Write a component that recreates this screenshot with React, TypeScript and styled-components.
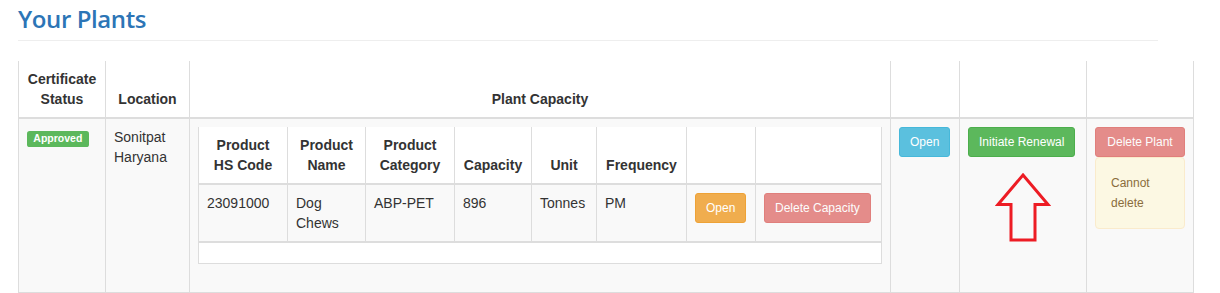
import React from 'react';
import styled, { createGlobalStyle, css } from 'styled-components';

type Variant = 'info' | 'success' | 'warning' | 'danger';

const palette: Record<Variant, { bg: string; border: string }> = {
  info: { bg: '#5bc0de', border: '#46b8da' },
  success: { bg: '#5cb85c', border: '#4cae4c' },
  warning: { bg: '#f0ad4e', border: '#eea236' },
  danger: { bg: '#d9534f', border: '#d43f3a' },
};

const capacities = [
  {
    hsCode: '23091000',
    name: 'Dog Chews',
    category: 'ABP-PET',
    capacity: '896',
    unit: 'Tonnes',
    frequency: 'PM',
  },
];

const innerCols = [89, 78, 89, 77, 65, 90, 69, 126];
const outerCols = [87, 84, 701, 69, 127, 107];

const App = () => {
  return (
    <Page>
      <GlobalStyle />
      <Title>Your Plants</Title>

      <OuterTable>
        <colgroup>
          {outerCols.map((w, i) => (
            <col key={i} style={{ width: w }} />
          ))}
        </colgroup>
        <thead>
          <tr>
            <Th>
              Certificate
              <br />
              Status
            </Th>
            <Th>Location</Th>
            <Th>Plant Capacity</Th>
            <Th />
            <Th />
            <Th />
          </tr>
        </thead>
        <tbody>
          <StripedRow>
            <Td>
              <Label>Approved</Label>
            </Td>
            <Td>Sonitpat Haryana</Td>
            <Td>
              <InnerTable>
                <colgroup>
                  {innerCols.map((w, i) => (
                    <col key={i} style={{ width: w }} />
                  ))}
                </colgroup>
                <thead>
                  <tr>
                    <Th>Product HS Code</Th>
                    <Th>Product Name</Th>
                    <Th>Product Category</Th>
                    <Th>Capacity</Th>
                    <Th>Unit</Th>
                    <Th>Frequency</Th>
                    <Th />
                    <Th />
                  </tr>
                </thead>
                <tbody>
                  {capacities.map((c) => (
                    <StripedRow key={c.hsCode}>
                      <Td>{c.hsCode}</Td>
                      <Td>{c.name}</Td>
                      <Td>{c.category}</Td>
                      <Td>{c.capacity}</Td>
                      <Td>{c.unit}</Td>
                      <Td>{c.frequency}</Td>
                      <Td>
                        <Button $variant="warning">Open</Button>
                      </Td>
                      <Td>
                        <Button $variant="danger" $disabled>
                          Delete Capacity
                        </Button>
                      </Td>
                    </StripedRow>
                  ))}
                </tbody>
                <FootBody>
                  <tr>
                    <EmptyCell colSpan={8} />
                  </tr>
                </FootBody>
              </InnerTable>
            </Td>
            <Td>
              <Button $variant="info">Open</Button>
            </Td>
            <Td>
              <Button $variant="success">Initiate Renewal</Button>
              <Arrow viewBox="0 0 60 76">
                <polygon
                  points="30,5 55,34.5 42,34.5 42,70 18,70 18,34.5 5,34.5"
                  fill="none"
                  stroke="#ed1c24"
                  strokeWidth="3"
                  strokeLinejoin="miter"
                />
              </Arrow>
            </Td>
            <Td>
              <Stack>
                <Button $variant="danger" $disabled>
                  Delete Plant
                </Button>
                <Alert>Cannot delete</Alert>
              </Stack>
            </Td>
          </StripedRow>
        </tbody>
      </OuterTable>
    </Page>
  );
};

const GlobalStyle = createGlobalStyle`
  body {
    margin: 0;
    background: #fff;
    font-family: "Liberation Sans", Arial, sans-serif;
    font-size: 14px;
    line-height: 20px;
    color: #333;
  }
`;

const Page = styled.div`
  padding-left: 18px;
`;

const Title = styled.h2`
  width: 1140px;
  margin: 6px 0 20px;
  padding-bottom: 8px;
  border-bottom: 1px solid #eee;
  font-family: 'Open Sans', 'Liberation Sans', sans-serif;
  font-weight: 600;
  font-size: 24px;
  line-height: 26px;
  letter-spacing: -0.4px;
  color: #2c75b6;
`;

const tableBase = css`
  table-layout: fixed;
  border-collapse: collapse;
  border-spacing: 0;
`;

const OuterTable = styled.table`
  ${tableBase}
  width: 1175px;
  border: 1px solid #ddd;
  border-top: 0;
`;

const InnerTable = styled.table`
  ${tableBase}
  width: 100%;
  margin-bottom: 20px;
  background: #fff;
  border: 1px solid #ddd;
  border-top: 0;
`;

const Th = styled.th`
  padding: 8px;
  border: 1px solid #ddd;
  border-top: 0;
  border-bottom: 2px solid #ddd;
  vertical-align: bottom;
  text-align: center;
  font-weight: bold;
  line-height: 20px;
`;

const Td = styled.td`
  padding: 8px;
  border: 1px solid #ddd;
  vertical-align: top;
  text-align: left;
  line-height: 20px;
`;

const StripedRow = styled.tr`
  background: #f9f9f9;
`;

const FootBody = styled.tbody`
  border-top: 2px solid #ddd;
`;

const EmptyCell = styled.td`
  height: 20px;
  padding: 0;
  border: 1px solid #ddd;
  background: #fff;
`;

const Label = styled.span`
  display: inline-block;
  padding: 0.2em 0.6em 0.3em;
  font-size: 10.5px;
  font-weight: bold;
  line-height: 1;
  color: #fff;
  background: #5cb85c;
  border-radius: 0.25em;
  vertical-align: baseline;
`;

const Button = styled.button<{ $variant: Variant; $disabled?: boolean }>`
  display: inline-block;
  padding: 5px 10px;
  font-family: inherit;
  font-size: 12px;
  line-height: 18px;
  color: #fff;
  white-space: nowrap;
  border-radius: 3px;
  cursor: pointer;
  background: ${({ $variant }) => palette[$variant].bg};
  border: 1px solid ${({ $variant }) => palette[$variant].border};
  opacity: ${({ $disabled }) => ($disabled ? 0.65 : 1)};
`;

const Arrow = styled.svg`
  display: block;
  width: 60px;
  height: 76px;
  margin: 13px auto 0;
`;

const Stack = styled.div`
  display: inline-flex;
  flex-direction: column;
`;

const Alert = styled.div`
  padding: 15px;
  font-size: 12px;
  line-height: 20px;
  color: #8a6d3b;
  background: #fcf8e3;
  border: 1px solid #faebcc;
  border-radius: 4px;
`;

export default App;
